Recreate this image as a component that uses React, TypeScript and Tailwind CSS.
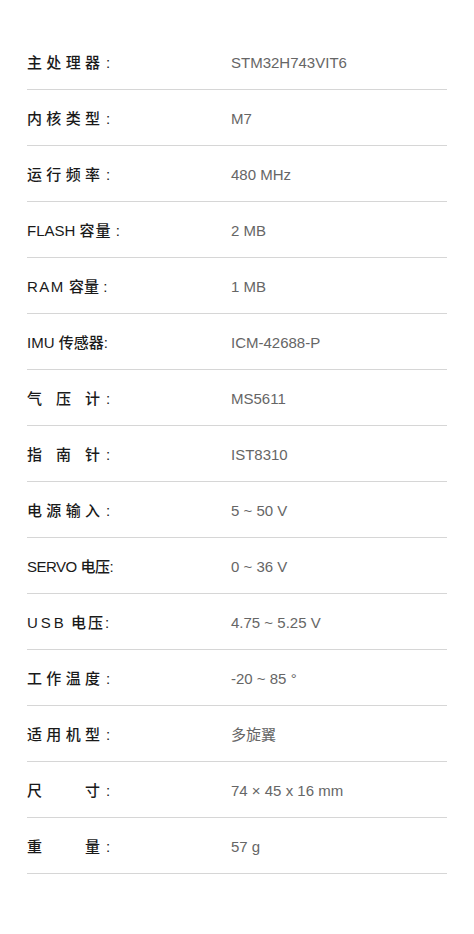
import React from "react";

type Row = { label: React.ReactNode; value: string };

const J = ({ chars }: { chars: string[] }) => (
  <span className="flex items-center">
    <span className="flex w-[73px] justify-between">
      {chars.map((c, i) => (
        <span key={i}>{c}</span>
      ))}
    </span>
    <span className="ml-[6px]">:</span>
  </span>
);

const rows: Row[] = [
  { label: <J chars={["主", "处", "理", "器"]} />, value: "STM32H743VIT6" },
  { label: <J chars={["内", "核", "类", "型"]} />, value: "M7" },
  { label: <J chars={["运", "行", "频", "率"]} />, value: "480 MHz" },
  {
    label: (
      <span>
        FLASH <span className="tracking-[1px]">容量</span> :
      </span>
    ),
    value: "2 MB",
  },
  {
    label: (
      <span>
        <span className="tracking-[1.5px]">RAM</span> 容量 :
      </span>
    ),
    value: "1 MB",
  },
  { label: <span>IMU 传感器:</span>, value: "ICM-42688-P" },
  { label: <J chars={["气", "压", "计"]} />, value: "MS5611" },
  { label: <J chars={["指", "南", "针"]} />, value: "IST8310" },
  { label: <J chars={["电", "源", "输", "入"]} />, value: "5 ~ 50 V" },
  { label: <span className="tracking-[-0.5px]">SERVO 电压:</span>, value: "0 ~ 36 V" },
  {
    label: (
      <span>
        <span className="tracking-[3px]">USB</span>{" "}
        <span className="tracking-[2px]">电压</span>:
      </span>
    ),
    value: "4.75 ~ 5.25 V",
  },
  { label: <J chars={["工", "作", "温", "度"]} />, value: "-20 ~ 85 °" },
  { label: <J chars={["适", "用", "机", "型"]} />, value: "多旋翼" },
  { label: <J chars={["尺", "寸"]} />, value: "74 × 45 x 16 mm" },
  { label: <J chars={["重", "量"]} />, value: "57 g" },
];

export default function App() {
  return (
    <div className="min-h-[934px] w-[474px] bg-white pt-[34px]">
      <div className="mx-[27px]">
        {rows.map((r, i) => (
          <div
            key={i}
            className="flex h-[56px] items-center border-b border-[#d6d6d6] pt-[3px]"
          >
            <div
              className="w-[204px] text-[15px] font-medium text-[#1a1a1a]"
              style={{ fontFamily: '"Liberation Sans", "Noto Sans CJK SC", sans-serif' }}
            >
              {r.label}
            </div>
            <div
              className="text-[15px] text-[#666666]"
              style={{ fontFamily: '"Liberation Sans", "Noto Sans CJK SC", sans-serif' }}
            >
              {r.value}
            </div>
          </div>
        ))}
      </div>
    </div>
  );
}
